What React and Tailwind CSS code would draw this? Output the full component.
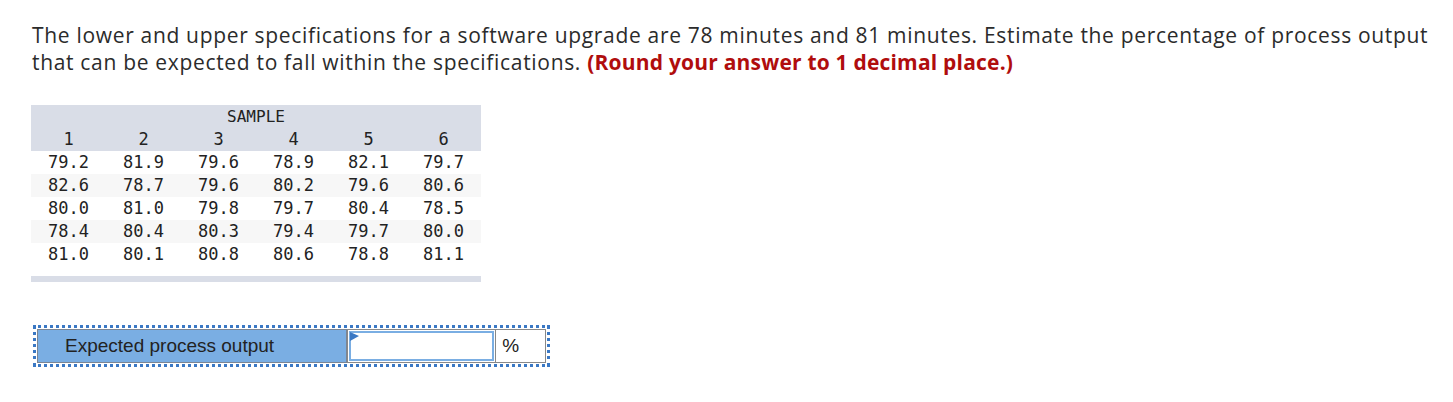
import React from "react";

const rows = [
  ["79.2", "81.9", "79.6", "78.9", "82.1", "79.7"],
  ["82.6", "78.7", "79.6", "80.2", "79.6", "80.6"],
  ["80.0", "81.0", "79.8", "79.7", "80.4", "78.5"],
  ["78.4", "80.4", "80.3", "79.4", "79.7", "80.0"],
  ["81.0", "80.1", "80.8", "80.6", "78.8", "81.1"],
];

const App = () => {
  return (
    <div className="w-[1453px] h-[402px] bg-white px-[32px] pt-[22px] text-[#2b2b2b]">
      {/* Question */}
      <p className="font-['Open_Sans',sans-serif] text-[21px] leading-[27px] tracking-[0.68px] whitespace-nowrap">
        The lower and upper specifications for a software upgrade are 78 minutes and 81 minutes. Estimate the percentage of process output
        <br />
        that can be expected to fall within the specifications.{" "}
        <span className="font-bold text-[#b00d0d] tracking-[0.2px]">(Round your answer to 1 decimal place.)</span>
      </p>

      {/* Sample table */}
      <div className="w-[450px] mt-[29px] -ml-px font-['DejaVu_Sans_Mono',monospace] text-[17px] text-[#222]">
        <div className="bg-[#d9dde7] h-[46px]">
          <div className="text-center text-[16px] leading-[22px] pt-[1px]">SAMPLE</div>
          <div className="grid grid-cols-6 text-center leading-[22px]">
            {["1", "2", "3", "4", "5", "6"].map((n) => (
              <div key={n}>{n}</div>
            ))}
          </div>
        </div>
        {rows.map((r, i) => (
          <div
            key={i}
            className={`grid grid-cols-6 text-center h-[23px] leading-[23px] ${
              i % 2 === 1 ? "bg-[#f7f7f7]" : "bg-white"
            }`}
          >
            {r.map((v, j) => (
              <div key={j}>{v}</div>
            ))}
          </div>
        ))}
        <div className="h-[10px]" />
        <div className="h-[6px] bg-[#d9dde7]" />
      </div>

      {/* Answer row */}
      <div className="mt-[43px] ml-[1px] w-[517px] border-[3px] border-dotted border-[#3a78c4] p-px flex font-['Liberation_Sans',Arial,sans-serif]">
        <div className="w-[311px] h-[34px] bg-[#7aaee3] border border-[#7a8594] text-[19px] text-[#222] flex items-center pl-[27px]">
          Expected process output
        </div>
        <div className="relative w-[150px] h-[34px] bg-white border border-[#888] p-px">
          <div className="w-full h-full border-2 border-[#7aaee3]" />
          <svg className="absolute left-[2px] top-[2px]" width="9" height="9" viewBox="0 0 9 9">
            <polygon points="0,0 9,4 0,9" fill="#3a78c4" />
          </svg>
        </div>
        <div className="w-[50px] h-[34px] bg-white border border-[#888] border-l-0 text-[19px] text-[#222] flex items-center pl-[6px]">
          %
        </div>
      </div>
    </div>
  );
};

export default App;
